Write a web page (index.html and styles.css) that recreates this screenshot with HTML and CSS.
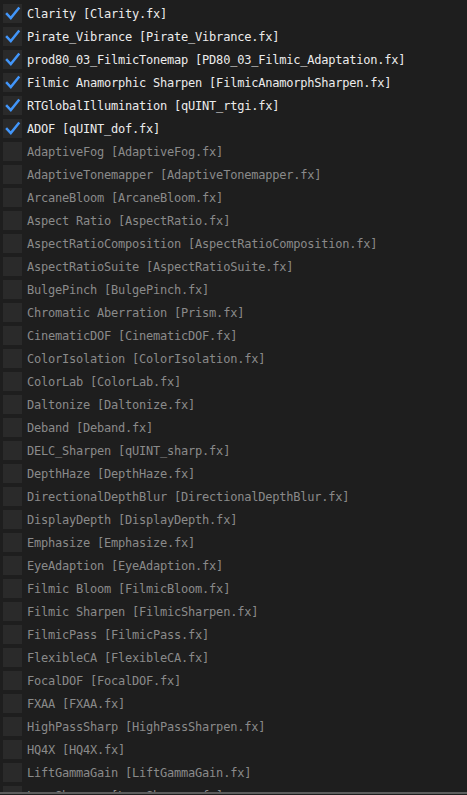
FILE: index.html
```html
<!DOCTYPE html>
<html>
<head>
<meta charset="utf-8">
<link rel="stylesheet" href="styles.css">
</head>
<body>
<div class="panel">
  <div class="list" id="list">
    <div class="row on"><span class="box"><svg viewBox="0 0 19 19"><polyline points="4,10 7.8,14 15.5,4.5"/></svg></span><span class="label">Clarity [Clarity.fx]</span></div>
    <div class="row on"><span class="box"><svg viewBox="0 0 19 19"><polyline points="4,10 7.8,14 15.5,4.5"/></svg></span><span class="label">Pirate_Vibrance [Pirate_Vibrance.fx]</span></div>
    <div class="row on"><span class="box"><svg viewBox="0 0 19 19"><polyline points="4,10 7.8,14 15.5,4.5"/></svg></span><span class="label">prod80_03_FilmicTonemap [PD80_03_Filmic_Adaptation.fx]</span></div>
    <div class="row on"><span class="box"><svg viewBox="0 0 19 19"><polyline points="4,10 7.8,14 15.5,4.5"/></svg></span><span class="label">Filmic Anamorphic Sharpen [FilmicAnamorphSharpen.fx]</span></div>
    <div class="row on"><span class="box"><svg viewBox="0 0 19 19"><polyline points="4,10 7.8,14 15.5,4.5"/></svg></span><span class="label">RTGlobalIllumination [qUINT_rtgi.fx]</span></div>
    <div class="row on"><span class="box"><svg viewBox="0 0 19 19"><polyline points="4,10 7.8,14 15.5,4.5"/></svg></span><span class="label">ADOF [qUINT_dof.fx]</span></div>
    <div class="row"><span class="box"></span><span class="label">AdaptiveFog [AdaptiveFog.fx]</span></div>
    <div class="row"><span class="box"></span><span class="label">AdaptiveTonemapper [AdaptiveTonemapper.fx]</span></div>
    <div class="row"><span class="box"></span><span class="label">ArcaneBloom [ArcaneBloom.fx]</span></div>
    <div class="row"><span class="box"></span><span class="label">Aspect Ratio [AspectRatio.fx]</span></div>
    <div class="row"><span class="box"></span><span class="label">AspectRatioComposition [AspectRatioComposition.fx]</span></div>
    <div class="row"><span class="box"></span><span class="label">AspectRatioSuite [AspectRatioSuite.fx]</span></div>
    <div class="row"><span class="box"></span><span class="label">BulgePinch [BulgePinch.fx]</span></div>
    <div class="row"><span class="box"></span><span class="label">Chromatic Aberration [Prism.fx]</span></div>
    <div class="row"><span class="box"></span><span class="label">CinematicDOF [CinematicDOF.fx]</span></div>
    <div class="row"><span class="box"></span><span class="label">ColorIsolation [ColorIsolation.fx]</span></div>
    <div class="row"><span class="box"></span><span class="label">ColorLab [ColorLab.fx]</span></div>
    <div class="row"><span class="box"></span><span class="label">Daltonize [Daltonize.fx]</span></div>
    <div class="row"><span class="box"></span><span class="label">Deband [Deband.fx]</span></div>
    <div class="row"><span class="box"></span><span class="label">DELC_Sharpen [qUINT_sharp.fx]</span></div>
    <div class="row"><span class="box"></span><span class="label">DepthHaze [DepthHaze.fx]</span></div>
    <div class="row"><span class="box"></span><span class="label">DirectionalDepthBlur [DirectionalDepthBlur.fx]</span></div>
    <div class="row"><span class="box"></span><span class="label">DisplayDepth [DisplayDepth.fx]</span></div>
    <div class="row"><span class="box"></span><span class="label">Emphasize [Emphasize.fx]</span></div>
    <div class="row"><span class="box"></span><span class="label">EyeAdaption [EyeAdaption.fx]</span></div>
    <div class="row"><span class="box"></span><span class="label">Filmic Bloom [FilmicBloom.fx]</span></div>
    <div class="row"><span class="box"></span><span class="label">Filmic Sharpen [FilmicSharpen.fx]</span></div>
    <div class="row"><span class="box"></span><span class="label">FilmicPass [FilmicPass.fx]</span></div>
    <div class="row"><span class="box"></span><span class="label">FlexibleCA [FlexibleCA.fx]</span></div>
    <div class="row"><span class="box"></span><span class="label">FocalDOF [FocalDOF.fx]</span></div>
    <div class="row"><span class="box"></span><span class="label">FXAA [FXAA.fx]</span></div>
    <div class="row"><span class="box"></span><span class="label">HighPassSharp [HighPassSharpen.fx]</span></div>
    <div class="row"><span class="box"></span><span class="label">HQ4X [HQ4X.fx]</span></div>
    <div class="row"><span class="box"></span><span class="label">LiftGammaGain [LiftGammaGain.fx]</span></div>
    <div class="row"><span class="box"></span><span class="label">LumaSharpen [LumaSharpen.fx]</span></div>
  </div>
  <div class="rule"></div>
</div>
</body>
</html>
```
FILE: styles.css
```css
html, body {
  margin: 0;
  padding: 0;
  background: #1e1e1e;
}
.panel {
  width: 467px;
  height: 795px;
  display: flex;
  flex-direction: column;
  overflow: hidden;
}
.list {
  height: 788px;
  padding: 4px 0 0 3px;
  overflow: hidden;
  display: flex;
  flex-direction: column;
  gap: 4px;
  flex: none;
}
.rule {
  height: 2px;
  background: #5e5e5e;
  flex: none;
}
.row {
  display: flex;
  align-items: flex-start;
  height: 19px;
  flex: none;
  gap: 5px;
}
.box {
  width: 19px;
  height: 19px;
  background: #2a2a2a;
  flex: none;
  display: block;
}
.box svg {
  width: 19px;
  height: 19px;
  display: block;
}
.box polyline {
  fill: none;
  stroke: #4296fa;
  stroke-width: 2.5;
  stroke-linecap: square;
  stroke-linejoin: miter;
}
.label {
  font-family: "DejaVu Sans Mono", "Liberation Mono", monospace;
  font-size: 12px;
  letter-spacing: -0.22px;
  line-height: 17px;
  padding-top: 2px;
  color: #8a8a8a;
  white-space: pre;
}
.row.on .label {
  color: #ececec;
}
```
